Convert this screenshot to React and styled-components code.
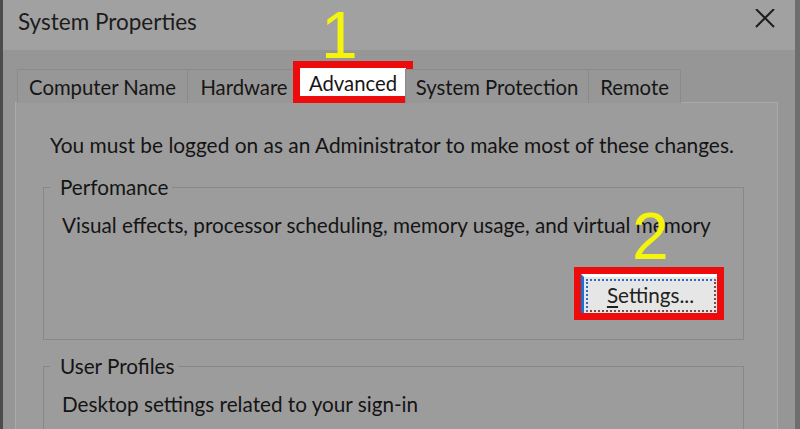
import React from "react";
import styled, { createGlobalStyle } from "styled-components";

const GlobalStyle = createGlobalStyle`
  html, body {
    margin: 0;
    padding: 0;
    background: #969696;
    overflow: hidden;
  }
  #root {
    width: 800px;
    height: 429px;
  }
`;

const FONT = `"Lato", "Noto Sans", "Liberation Sans", sans-serif`;

const Window = styled.div`
  position: relative;
  box-sizing: border-box;
  width: 800px;
  height: 429px;
  display: flex;
  flex-direction: column;
  background: #969696;
  border-left: 3px solid #4c4c4c;
  border-right: 5px solid #6e6e6e;
  font-family: ${FONT};
  color: #141414;
  overflow: hidden;
`;

const TitleBar = styled.div`
  height: 50px;
  flex: none;
  display: flex;
  align-items: flex-start;
  justify-content: space-between;
  padding: 8px 19px 0 15px;
  box-sizing: border-box;
  background: #a1a1a1;
`;

const Title = styled.div`
  font-size: 22.5px;
  line-height: 27px;
  color: #1c1c1c;
`;

const CloseButton = styled.div`
  width: 22px;
  height: 22px;
  display: flex;
  align-items: center;
  justify-content: center;
`;

const Body = styled.div`
  flex: 1;
  display: flex;
  flex-direction: column;
  padding: 19px 13px 0 12px;
  min-height: 0;
`;

const TabRow = styled.div`
  display: flex;
  align-items: flex-start;
  height: 33px;
  padding-left: 2px;
  position: relative;
  z-index: 1;
`;

const Tab = styled.div`
  box-sizing: border-box;
  width: ${(p) => p.$w}px;
  height: ${(p) => (p.$active ? 28 : 34)}px;
  margin-top: ${(p) => (p.$active ? -1 : 0)}px;
  display: flex;
  align-items: center;
  justify-content: center;
  font-size: 20.3px;
  color: #161616;
  background: ${(p) => (p.$active ? "#ffffff" : "#979797")};
  border: 1px solid ${(p) => (p.$active ? "#ffffff" : "#8a8a8a")};
  border-bottom: none;
  outline: ${(p) => (p.$active ? "7px solid #ee0b0b" : "none")};
  & + & {
    margin-left: ${(p) => (p.$gap ? p.$gap : -1)}px;
  }
`;

const Panel = styled.div`
  flex: 1;
  box-sizing: border-box;
  width: 763px;
  background: #9c9c9c;
  border: 1px solid #aaaaaa;
  border-bottom: none;
  padding: 28px 0 0 27px;
`;

const Notice = styled.div`
  font-size: 20.9px;
  line-height: 28px;
  padding-left: 7px;
`;

const Group = styled.fieldset`
  box-sizing: border-box;
  width: 701px;
  margin: ${(p) => p.$top}px 0 0 0;
  padding: 10px 19px ${(p) => p.$bottom}px 18px;
  border: 1px solid #888888;
  min-width: 0;
`;

const Legend = styled.legend`
  font-size: 20.7px;
  line-height: 28px;
  margin-left: -12px;
  padding: 0 4px 0 10px;
`;

const GroupText = styled.div`
  font-size: 20.7px;
  line-height: 28px;
`;

const ButtonRow = styled.div`
  display: flex;
  justify-content: flex-end;
  margin-top: 28px;
`;

const Highlight = styled.div`
  border: 7px solid #ee0b0b;
  display: flex;
`;

const PushButton = styled.div`
  box-sizing: border-box;
  width: 136px;
  height: 39px;
  background: #e6e6e6;
  border-top: 3px solid #ffffff;
  border-left: 3px solid #1a72d0;
  display: flex;
  align-items: center;
  justify-content: center;
  position: relative;
  font-size: 20.7px;
  color: #222;
  &::before {
    content: "";
    position: absolute;
    inset: 2px 1px 1px 2px;
    border: 2px dotted #7a4a4a;
    border-top-color: #2a6fc4;
    border-left-color: #2a6fc4;
  }
`;

const AccessKey = styled.span`
  text-decoration: underline;
  text-underline-offset: 3px;
`;

const Marker = styled.div`
  position: absolute;
  z-index: 2;
  left: ${(p) => p.$x}px;
  top: ${(p) => p.$y}px;
  font-family: "Liberation Sans", Arial, sans-serif;
  font-size: ${(p) => p.$size}px;
  line-height: 1.07;
  color: #f4f40c;
  pointer-events: none;
`;

export default function App() {
  return (
    <>
      <GlobalStyle />
      <Window>
        <TitleBar>
          <Title>System Properties</Title>
          <CloseButton>
            <svg width="20" height="20" viewBox="0 0 20 20">
              <path d="M1 0 L19 18 M19 0 L1 18" stroke="#1e1e1e" strokeWidth="2" fill="none" />
            </svg>
          </CloseButton>
        </TitleBar>
        <Body>
          <TabRow>
            <Tab $w={171}>Computer Name</Tab>
            <Tab $w={114}>Hardware</Tab>
            <Tab $w={106} $active $gap={3}>Advanced</Tab>
            <Tab $w={184} $gap={14}>System Protection</Tab>
            <Tab $w={93}>Remote</Tab>
          </TabRow>
          <Panel>
            <Notice>You must be logged on as an Administrator to make most of these changes.</Notice>
            <Group $top={14} $bottom={19}>
              <Legend>Perfomance</Legend>
              <GroupText>Visual effects, processor scheduling, memory usage, and virtual memory</GroupText>
              <ButtonRow>
                <Highlight>
                  <PushButton>
                    <span>
                      <AccessKey>S</AccessKey>ettings...
                    </span>
                  </PushButton>
                </Highlight>
              </ButtonRow>
            </Group>
            <Group $top={12} $bottom={40}>
              <Legend>User Profiles</Legend>
              <GroupText>Desktop settings related to your sign-in</GroupText>
            </Group>
          </Panel>
        </Body>
        <Marker $x={318} $y={0} $size={66}>1</Marker>
        <Marker $x={629} $y={201} $size={66}>2</Marker>
      </Window>
    </>
  );
}
